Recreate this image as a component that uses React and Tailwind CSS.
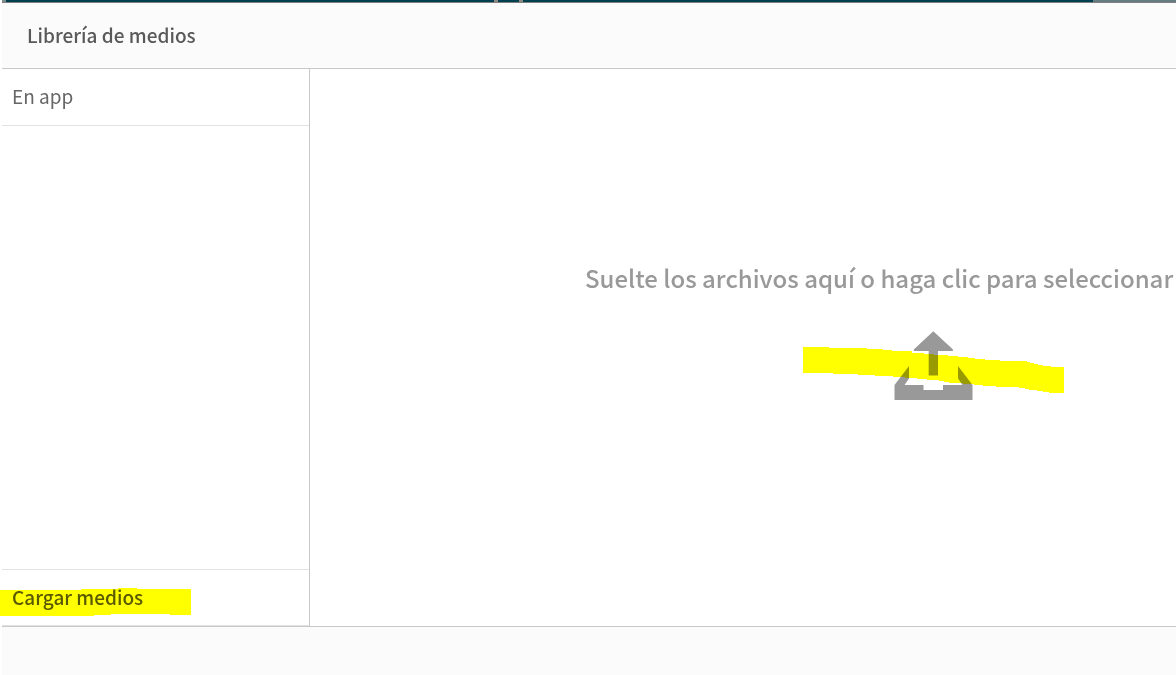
const sources = [{ id: 'app', name: 'En app' }];

function UploadIcon() {
    return (
        <svg viewBox="0 0 79 69" className="h-[69px] w-[79px]" fill="#999999" aria-hidden="true">
            <path d="M39.3 0.3L59 18.5Q59.4 20 58 20H44v24.5h-9.3V20H20.6Q19.4 20 19.8 18.5z" />
            <path d="M0.5 54L15 35v12.5L10.5 54H29.5v5H49v-5H68.5L64 47.5V35L78.5 54v15H0.5z" />
        </svg>
    );
}

// Marker strokes drawn over the places the user has to look at
function MenuMarker() {
    return (
        <svg viewBox="0 0 192 29" className="pointer-events-none absolute -left-0.5 top-[18px] h-[29px] w-[192px] mix-blend-multiply" fill="#ffff00" shapeRendering="crispEdges" aria-hidden="true">
            <path d="M0 2H81V1H118V0H137V1H191V27H170V26H111V27H94V28H0z" />
        </svg>
    );
}

function UploadMarker() {
    return (
        <svg viewBox="0 0 261 47" className="pointer-events-none absolute -left-[91px] top-[16px] h-[47px] w-[261px] max-w-none mix-blend-multiply" fill="#ffff00" shapeRendering="crispEdges" aria-hidden="true">
            <path d="M0 0H26V1H64V2H80V3H89V4H109V6H121V7H131V8H145V9H155V10H165V11H172V12H182V13H197V14H224V15H227V16H231V17H235V18H240V19H248V20H261V46H246V45H240V44H234V43H226V42H222V41H216V40H193V39H180V38H171V37H160V36H146V35H141V34H136V33H124V32H114V31H102V30H90V29H72V28H55V27H30V26H0z" />
        </svg>
    );
}

export default function App() {
    return (
        <div className="flex h-screen flex-col overflow-hidden bg-white font-['Noto_Sans_CJK_SC','Open_Sans',sans-serif] text-[#595959]">
            {/* Edge of the page behind the dialog */}
            <div className="ml-0.5 flex h-[3px] shrink-0 border-b border-[#7f7f7f] bg-[#667c82]">
                <div className="w-1 bg-[#7d8e91]" />
                <div className="flex w-[1087px] bg-[#003f4f]">
                    <div className="ml-[488px] w-1 bg-[#8b8a80]" />
                    <div className="ml-[21px] w-1 bg-[#8b8a80]" />
                </div>
            </div>

            <div className="ml-0.5 flex min-h-0 flex-1 flex-col">
                <header className="flex h-[66px] shrink-0 items-center border-b border-[#c8c8c8] bg-[#fbfbfb] px-[25px] pb-0.5">
                    <h1 className="text-[19px] font-medium leading-6">Librería de medios</h1>
                </header>

                <div className="flex min-h-0 flex-1">
                    <nav className="flex w-[308px] shrink-0 flex-col border-r border-[#c8c8c8]">
                        {sources.map((source) => (
                            <button key={source.id} type="button" className="h-[57px] border-b border-[#e2e2e2] px-2.5 pb-0.5 text-left text-[19px] leading-6 text-[#666666]">
                                {source.name}
                            </button>
                        ))}
                        <div className="relative mt-auto border-y border-[#e2e2e2]">
                            <button type="button" className="h-[55px] w-full px-2.5 pb-0.5 text-left text-[19px] font-medium leading-6">
                                Cargar medios
                            </button>
                            <MenuMarker />
                        </div>
                    </nav>

                    <main className="min-w-0 flex-1 overflow-hidden">
                        <button type="button" className="flex h-full w-[1247px] flex-col items-center justify-center pb-[35px]">
                            <span className="w-[697px] whitespace-nowrap text-left text-[24px] font-medium leading-9 text-[#999999]">
                                Suelte los archivos aquí o haga clic para seleccionar
                            </span>
                            <span className="relative mt-[35px]">
                                <UploadIcon />
                                <UploadMarker />
                            </span>
                        </button>
                    </main>
                </div>

                <footer className="h-[49px] shrink-0 border-t border-[#c8c8c8] bg-[#fbfbfb]" />
            </div>
        </div>
    );
}
